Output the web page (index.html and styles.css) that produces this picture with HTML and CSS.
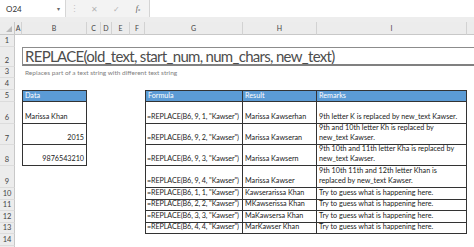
FILE: index.html
```html
<!DOCTYPE html>
<html>
<head>
<meta charset="utf-8">
<link rel="stylesheet" href="styles.css">
</head>
<body>
<div class="top">
  <div class="fbar">
    <div class="namebox"><span class="ref">O24</span><span class="caret">▾</span></div>
    <div class="sep">⋮</div>
    <div class="btns"><span class="btn">✕</span><span class="btn">✓</span><span class="btn fx">f<span class="sub">x</span></span></div>
    <div class="finput"></div>
  </div>
</div>
<div class="sheet">
  <div class="corner"><span class="tri"></span></div>
  <div class="colheads">
    <div class="ch">A</div><div class="ch">B</div><div class="ch">C</div><div class="ch">D</div><div class="ch">E</div><div class="ch">F</div><div class="ch">G</div><div class="ch">H</div><div class="ch">I</div><div class="ch last"></div>
  </div>
  <div class="rowheads">
    <div class="rh">1</div><div class="rh">2</div><div class="rh">3</div><div class="rh">4</div><div class="rh">5</div><div class="rh">6</div><div class="rh">7</div><div class="rh">8</div><div class="rh">9</div><div class="rh">10</div><div class="rh">11</div><div class="rh">12</div><div class="rh">13</div><div class="rh">14</div><div class="rh"></div>
  </div>

  <div class="title">REPLACE(old_text, start_num, num_chars, new_text)</div>
  <div class="subtitle">Replaces part of a text string with different text string</div>

  <div class="dtable">
    <div class="c hd">Data</div>
    <div class="c">Marissa Khan</div>
    <div class="c num">2015</div>
    <div class="c num">9876543210</div>
  </div>

  <div class="ftable">
    <div class="c hd">Formula</div><div class="c hd">Result</div><div class="c hd">Remarks</div>
    <div class="c f">=REPLACE(B6, 9, 1, "Kawser")</div><div class="c">Marissa Kawserhan</div><div class="c">9th letter K is replaced by new_text Kawser.</div>
    <div class="c f">=REPLACE(B6, 9, 2, "Kawser")</div><div class="c">Marissa Kawseran</div><div class="c">9th and 10th letter Kh is replaced by<br>new_text Kawser.</div>
    <div class="c f">=REPLACE(B6, 9, 3, "Kawser")</div><div class="c">Marissa Kawsern</div><div class="c">9th 10th and 11th letter Kha is replaced by<br>new_text Kawser.</div>
    <div class="c f">=REPLACE(B6, 9, 4, "Kawser")</div><div class="c">Marissa Kawser</div><div class="c">9th 10th 11th and 12th letter Khan is<br>replaced by new_text Kawser.</div>
    <div class="c f">=REPLACE(B6, 1, 1, "Kawser")</div><div class="c">Kawserarissa Khan</div><div class="c">Try to guess what is happening here.</div>
    <div class="c f">=REPLACE(B6, 2, 2, "Kawser")</div><div class="c">MKawserissa Khan</div><div class="c">Try to guess what is happening here.</div>
    <div class="c f">=REPLACE(B6, 3, 3, "Kawser")</div><div class="c">MaKawsersa Khan</div><div class="c">Try to guess what is happening here.</div>
    <div class="c f">=REPLACE(B6, 4, 4, "Kawser")</div><div class="c">MarKawser Khan</div><div class="c">Try to guess what is happening here.</div>
  </div>
</div>
</body>
</html>
```
FILE: styles.css
```css
* { box-sizing: border-box; }
html, body { margin: 0; padding: 0; }
body {
  width: 474px;
  height: 247px;
  overflow: hidden;
  background: #fff;
  font-family: Lato, "Liberation Sans", sans-serif;
}

/* formula bar */
.top { background: #ededed; padding-bottom: 5px; }
.fbar { display: flex; height: 17px; background: #f3f3f3; }
.namebox {
  width: 66px;
  background: #fff;
  display: flex;
  align-items: center;
  justify-content: space-between;
  padding: 0 5px 0 6px;
  font-size: 8px;
  color: #333;
  border-right: 1px solid #d6d6d6;
}
.caret { font-size: 6px; color: #666; }
.sep {
  width: 17px;
  display: flex;
  align-items: center;
  justify-content: center;
  color: #c4c4c4;
  font-size: 9px;
}
.btns { width: 66px; display: flex; align-items: center; }
.btn {
  width: 22px;
  text-align: center;
  font-size: 8px;
  color: #b4b4b4;
}
.fx { font-family: "Liberation Serif", serif; font-style: italic; color: #555; font-size: 8px; }
.sub { font-size: 5px; }
.finput { flex: 1; background: #fff; border-left: 1px solid #d4d4d4; }

/* sheet grid */
.sheet {
  display: grid;
  grid-template-columns: 15px 7px 65px 14px 11px 18px 15px 98px 74px 150px 1fr;
  grid-template-rows: 13px 12px 20px 11px 12px 12px 22px 21px 21px 22px 12px 11px 12px 11px 12px 12px;
}
.corner {
  grid-column: 1;
  grid-row: 1;
  background: #ececec;
  border-right: 1px solid #c8c8c8;
  border-bottom: 1px solid #c8c8c8;
  display: flex;
  align-items: flex-end;
  justify-content: flex-end;
  padding: 0 2px 2px 0;
}
.tri {
  width: 0;
  height: 0;
  border-left: 6px solid transparent;
  border-bottom: 6px solid #b9b9b9;
}
.colheads {
  grid-column: 2 / -1;
  grid-row: 1;
  display: grid;
  grid-template-columns: subgrid;
}
.ch {
  background: #ececec;
  border-right: 1px solid #d2d2d2;
  border-bottom: 1px solid #c8c8c8;
  font-size: 7px;
  color: #444;
  display: flex;
  align-items: center;
  justify-content: center;
}
.ch.last { border-right: none; }
.rowheads {
  grid-column: 1;
  grid-row: 2 / -1;
  display: grid;
  grid-template-rows: subgrid;
}
.rh {
  background: #ececec;
  border-right: 1px solid #c8c8c8;
  border-bottom: 1px solid #dcdcdc;
  font-size: 7.5px;
  color: #444;
  display: flex;
  align-items: flex-end;
  justify-content: center;
  padding-bottom: 1px;
  line-height: 9px;
}

.title {
  grid-column: 3 / -1;
  grid-row: 3;
  margin-bottom: 1px;
  border: 1px solid #8c8c8c;
  border-right: none;
  border-bottom: 2px solid #808080;
  font-size: 15px;
  letter-spacing: -0.7px;
  color: #4d4d4d;
  display: flex;
  align-items: center;
  padding-left: 2px;
  white-space: nowrap;
  overflow: hidden;
}
.subtitle {
  grid-column: 3 / -1;
  grid-row: 4;
  font-size: 6.5px;
  color: #808080;
  display: flex;
  align-items: center;
  padding-left: 3px;
  white-space: nowrap;
}

.dtable {
  grid-column: 3;
  grid-row: 6 / 10;
  display: grid;
  grid-template-rows: subgrid;
  border-left: 1px solid #333;
  border-top: 1px solid #333;
}
.ftable {
  grid-column: 8 / 11;
  grid-row: 6 / 15;
  display: grid;
  grid-template-columns: subgrid;
  grid-template-rows: subgrid;
  border-left: 1px solid #333;
  border-top: 1px solid #333;
}
.c {
  border-right: 1px solid #333;
  border-bottom: 1px solid #333;
  font-size: 7.2px;
  color: #222;
  display: flex;
  align-items: flex-end;
  padding: 0 2px 1px;
  white-space: nowrap;
  overflow: hidden;
  line-height: 10px;
}
.c.f { letter-spacing: -0.1px; padding-left: 1px; }
.c.hd {
  background: #5b9bd5;
  color: #fff;
  align-items: center;
}
.c.num { justify-content: flex-end; }
```
